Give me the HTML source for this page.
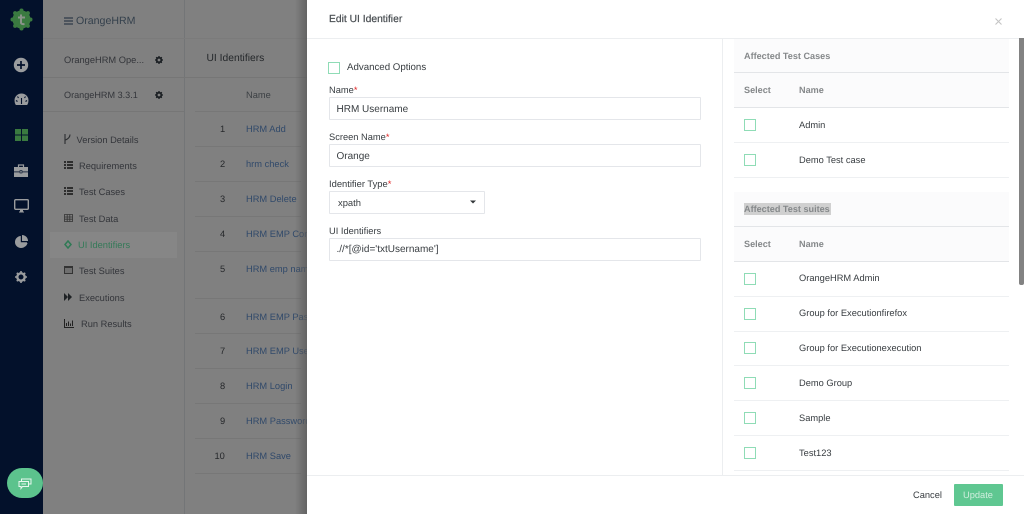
<!DOCTYPE html>
<html><head><meta charset="utf-8"><style>
html,body{margin:0;padding:0;width:1024px;height:514px;overflow:hidden;background:#fff}
body{font-family:"Liberation Sans",sans-serif;font-size:9.3px;position:relative;text-rendering:geometricPrecision}
#w{position:absolute;left:0;top:0;width:1024px;height:514px;overflow:hidden;filter:blur(.3px)}
#w div,#w svg{position:absolute}
.t{position:absolute;white-space:nowrap;line-height:12px;margin-top:1px}
.bg{background:#808080}
.dk{color:#26282b}
.lk{color:#30496a}
.nm{color:#33353a}
.rule{height:1px;background:#777}
.m{color:#383d41}
.v{font-size:10px}
.h{color:#85888a;font-weight:bold;font-size:9.1px}
.cb{width:10px;height:10px;border:1px solid #8fdcb6;background:#fff}
.inp{height:21px;border:1px solid #e4e6ea;background:#fff;border-radius:1px}
.l{height:1px;background:#eef0f2;left:734px;width:275px}
.l2{height:1px;background:#e3e5e8;left:734px;width:275px}
.s{color:#e02a2a}
</style></head><body><div id="w">

<div class="bg" style="left:0;top:0;width:310px;height:514px"></div>
<div style="left:0;top:0;width:43px;height:514px;background:#03112b"></div>
<div style="left:184px;top:0;width:1px;height:514px;background:#737577"></div>
<div class="rule" style="left:43px;top:38px;width:264px;background:#7b7b7b"></div>
<div class="rule" style="left:43px;top:77px;width:264px;background:#767676"></div>
<div class="rule" style="left:43px;top:111px;width:141px;background:#767676"></div>
<div style="left:50px;top:232px;width:127px;height:26px;background:#868686"></div>

<!-- logo -->
<svg style="left:10px;top:8px" width="23" height="23" viewBox="0 0 23 23"><g fill="#3a7a40"><circle cx="11.5" cy="11.5" r="9"/><circle cx="11.5" cy="2.5" r="2"/><circle cx="11.5" cy="20.5" r="2"/><circle cx="2.5" cy="11.5" r="2"/><circle cx="20.5" cy="11.5" r="2"/><circle cx="5.1" cy="5.1" r="2"/><circle cx="17.9" cy="5.1" r="2"/><circle cx="5.1" cy="17.9" r="2"/><circle cx="17.9" cy="17.9" r="2"/></g><path d="M11 6.5V14.5Q11 16.5 14.5 16M8 9.5H15" fill="none" stroke="#8a948a" stroke-width="2"/></svg>

<!-- sidebar icons -->
<svg style="left:13px;top:57px" width="16" height="16" viewBox="0 0 16 16"><circle cx="8" cy="8" r="7.2" fill="#9a9c9e"/><path d="M8 4v8M4 8h8" stroke="#03112b" stroke-width="1.7"/></svg>
<svg style="left:14px;top:93px" width="15" height="13" viewBox="0 0 15 13"><path d="M7.5 .5A7 7 0 0 0 .5 7.5Q.5 10 1.8 12H13.2Q14.5 10 14.500 7.500A7 7 0 0 0 7.500 .5Z" fill="#9a9c9e"/><path d="M7.500 11V5M3.500 8.500L2 7.500M11.500 8.500L13 7.500M4.500 5L3.500 3.500M10.500 5L11.500 3.500" stroke="#03112b" stroke-width="1.100"/></svg>
<svg style="left:15px;top:129px" width="13" height="12" viewBox="0 0 13 12"><g fill="#3a7a40"><rect width="6" height="5.500"/><rect x="7" width="6" height="5.500"/><rect y="6.500" width="6" height="5.500"/><rect x="7" y="6.500" width="6" height="5.500"/></g></svg>
<svg style="left:14px;top:164px" width="14" height="13" viewBox="0 0 14 13"><path d="M4.500 3V1h5v2" fill="none" stroke="#9a9c9e" stroke-width="1.200"/><rect y="3" width="14" height="4.500" fill="#9a9c9e"/><rect y="8.300" width="14" height="4.700" fill="#9a9c9e"/><rect x="6" y="6.500" width="2" height="2.500" fill="#9a9c9e" stroke="#03112b" stroke-width=".6"/></svg>
<svg style="left:14px;top:199px" width="15" height="14" viewBox="0 0 15 14"><rect x=".7" y=".7" width="13.600" height="9.600" rx="1" fill="none" stroke="#9a9c9e" stroke-width="1.400"/><path d="M5 13h5M6.500 10.500h2V13h-2z" stroke="#9a9c9e" fill="#9a9c9e"/></svg>
<svg style="left:15px;top:235px" width="13" height="13" viewBox="0 0 13 13"><path d="M5.800 1A6 6 0 1 0 12 7.200H5.800Z" fill="#9a9c9e"/><path d="M7 0A6 6 0 0 1 13 6H7ZM7.800 8H12.600Q11.800 10.500 10.400 11.500Z" fill="#9a9c9e"/></svg>
<svg style="left:15px;top:271px" width="12" height="12" viewBox="0 0 12 12"><circle cx="6" cy="6" r="3.700" fill="none" stroke="#9a9c9e" stroke-width="2.400"/><path d="M6 0v12M0 6h12M1.800 1.800l8.400 8.400M10.200 1.800l-8.400 8.400" stroke="#9a9c9e" stroke-width="1.600" stroke-dasharray="2.200 7.600"/></svg>

<!-- chat button -->
<div style="left:7px;top:468px;width:36px;height:30px;border-radius:15px;background:#5cc38d"></div>
<svg style="left:18px;top:478px" width="14" height="12" viewBox="0 0 14 12"><path d="M3.500 3V1H13V6H11M1 3.500H10.500V8.500H4.500L3 10.500V8.500H1ZM3.500 6H8" fill="none" stroke="#e8f7ef" stroke-width="1"/></svg>

<!-- header -->
<svg style="left:64px;top:17px" width="9" height="8" viewBox="0 0 9 8"><path d="M0 1h9M0 4h9M0 7h9" stroke="#2f3a48" stroke-width="1.300"/></svg>
<span class="t" style="left:76px;top:14px;font-size:10.600px;color:#34404c">OrangeHRM</span>
<span class="t nm" style="left:64px;top:53px">OrangeHRM Ope...</span>
<span class="t nm" style="left:64px;top:88px;font-size:9.100px">OrangeHRM 3.3.1</span>
<svg style="left:155px;top:56px" width="8" height="8" viewBox="0 0 12 12"><circle cx="6" cy="6" r="3.500" fill="none" stroke="#1c2024" stroke-width="2.800"/><path d="M6 0v12M0 6h12M1.800 1.800l8.400 8.400M10.200 1.800l-8.400 8.400" stroke="#1c2024" stroke-width="2" stroke-dasharray="2.200 7.600"/></svg>
<svg style="left:155px;top:91px" width="8" height="8" viewBox="0 0 12 12"><circle cx="6" cy="6" r="3.500" fill="none" stroke="#1c2024" stroke-width="2.800"/><path d="M6 0v12M0 6h12M1.800 1.800l8.400 8.400M10.200 1.800l-8.400 8.400" stroke="#1c2024" stroke-width="2" stroke-dasharray="2.200 7.600"/></svg>
<span class="t" style="left:206.500px;top:52px;font-size:10.300px;color:#24272a">UI Identifiers</span>
<span class="t" style="left:246px;top:88px;color:#3c4044">Name</span>
<div class="rule" style="left:195px;top:111px;width:106px"></div>

<!-- left menu -->
<svg style="left:64px;top:134px" width="7" height="10" viewBox="0 0 7 10"><path d="M1 0V10M6 0.500Q6 4 1.500 6" fill="none" stroke="#2b2d30" stroke-width="1.100"/></svg>
<span class="t nm" style="left:76.500px;top:133px">Version Details</span>
<svg style="left:64px;top:161px" width="9" height="8" viewBox="0 0 9 8"><path d="M0 1h2M3 1h6M0 4h2M3 4h6M0 7h2M3 7h6" stroke="#222" stroke-width="1.700"/></svg>
<span class="t nm" style="left:79px;top:159px">Requirements</span>
<svg style="left:64px;top:187px" width="9" height="8" viewBox="0 0 9 8"><path d="M0 1h2M3 1h6M0 4h2M3 4h6M0 7h2M3 7h6" stroke="#222" stroke-width="1.700"/></svg>
<span class="t nm" style="left:79px;top:185px">Test Cases</span>
<svg style="left:64px;top:214px" width="9" height="8" viewBox="0 0 9 8"><path d="M.5 .5h8v7h-8zM.5 3h8M.5 5.200h8M3.200 .5v7M5.800 .5v7" fill="none" stroke="#333" stroke-width=".8"/></svg>
<span class="t nm" style="left:79px;top:212px">Test Data</span>
<svg style="left:64px;top:240px" width="8" height="9" viewBox="0 0 8 9"><path d="M4 1L7 4.500L4 8L1 4.500Z" fill="none" stroke="#2f7a55" stroke-width="1.500"/></svg>
<span class="t" style="left:78px;top:238px;color:#347a58">UI Identifiers</span>
<svg style="left:64px;top:266px" width="9" height="8" viewBox="0 0 9 8"><rect width="9" height="8" fill="#333"/><rect x="1" y="2" width="7" height="5" fill="#6f6f6f"/></svg>
<span class="t nm" style="left:79px;top:264px">Test Suites</span>
<svg style="left:64px;top:293px" width="8" height="8" viewBox="0 0 8 8"><path d="M0 0L4 4L0 8ZM4 0L8 4L4 8Z" fill="#1f2225"/></svg>
<span class="t nm" style="left:79px;top:291px">Executions</span>
<svg style="left:64px;top:319px" width="10" height="9" viewBox="0 0 10 9"><path d="M.5 0V8.500H10M2.500 7V4M4.500 7V2.500M6.500 7V4.500M8.500 7V1.500" fill="none" stroke="#222" stroke-width="1"/></svg>
<span class="t nm" style="left:81px;top:317px">Run Results</span>

<!-- table rows -->
<span class="t dk" style="left:220px;top:122px">1</span><span class="t lk" style="left:246px;top:122px">HRM Add</span>
<span class="t dk" style="left:220px;top:157px">2</span><span class="t lk" style="left:246px;top:157px">hrm check</span>
<span class="t dk" style="left:220px;top:192px">3</span><span class="t lk" style="left:246px;top:192px">HRM Delete</span>
<span class="t dk" style="left:220px;top:227px">4</span><span class="t lk" style="left:246px;top:227px">HRM EMP Con</span>
<span class="t dk" style="left:220px;top:262px">5</span><span class="t lk" style="left:246px;top:262px">HRM emp nam</span>
<span class="t dk" style="left:220px;top:310px">6</span><span class="t lk" style="left:246px;top:310px">HRM EMP Pas</span>
<span class="t dk" style="left:220px;top:344px">7</span><span class="t lk" style="left:246px;top:344px">HRM EMP Use</span>
<span class="t dk" style="left:220px;top:379px">8</span><span class="t lk" style="left:246px;top:379px">HRM Login</span>
<span class="t dk" style="left:220px;top:414px">9</span><span class="t lk" style="left:246px;top:414px">HRM Password</span>
<span class="t dk" style="left:214.500px;top:449px">10</span><span class="t lk" style="left:246px;top:449px">HRM Save</span>
<div class="rule" style="left:195px;top:146px;width:106px"></div>
<div class="rule" style="left:195px;top:181px;width:106px"></div>
<div class="rule" style="left:195px;top:216px;width:106px"></div>
<div class="rule" style="left:195px;top:251px;width:106px"></div>
<div class="rule" style="left:195px;top:298px;width:106px"></div>
<div class="rule" style="left:195px;top:333px;width:106px"></div>
<div class="rule" style="left:195px;top:368px;width:106px"></div>
<div class="rule" style="left:195px;top:403px;width:106px"></div>
<div class="rule" style="left:195px;top:438px;width:106px"></div>
<div class="rule" style="left:195px;top:473px;width:106px"></div>
<div style="left:295px;top:0;width:12px;height:514px;background:linear-gradient(90deg,rgba(90,90,90,0),rgba(90,90,90,.75))"></div>

<!-- modal -->
<div style="left:307px;top:0;width:717px;height:514px;background:#fff"></div>
<div style="left:307px;top:38px;width:717px;height:1px;background:#eceef0"></div>
<div style="left:722px;top:39px;width:1px;height:436px;background:#eceef0"></div>
<div style="left:307px;top:475px;width:717px;height:1px;background:#eceef0"></div>
<span class="t" style="left:329px;top:13px;font-size:10.300px;color:#474c50;-webkit-text-stroke:.2px #474c50">Edit UI Identifier</span>
<svg style="left:995px;top:18px" width="7" height="7" viewBox="0 0 7 7"><path d="M.5 .5L6.500 6.500M6.500 .5L.5 6.500" stroke="#c4c4c4" stroke-width="1.100"/></svg>

<div class="cb" style="left:328px;top:62px"></div>
<span class="t m" style="left:347px;top:60.500px;font-size:9.700px">Advanced Options</span>
<span class="t m" style="left:329px;top:83px">Name<span class="s">*</span></span>
<div class="inp" style="left:329px;top:97px;width:370px"></div>
<span class="t m v" style="left:336.500px;top:102.500px">HRM Username</span>
<span class="t m" style="left:329px;top:130px">Screen Name<span class="s">*</span></span>
<div class="inp" style="left:329px;top:144px;width:370px"></div>
<span class="t m v" style="left:336.500px;top:149.500px">Orange</span>
<span class="t m" style="left:329px;top:177px;font-size:9.400px">Identifier Type<span class="s">*</span></span>
<div class="inp" style="left:329px;top:191px;width:154px"></div>
<span class="t m" style="left:338px;top:196px;font-size:9.400px">xpath</span>
<svg style="left:470px;top:200px" width="6" height="4" viewBox="0 0 6 4"><path d="M0 .5H6L3 3.500Z" fill="#33373a"/></svg>
<span class="t m" style="left:329px;top:224px">UI Identifiers</span>
<div class="inp" style="left:329px;top:238px;width:370px"></div>
<span class="t m v" style="left:336.500px;top:243px">.//*[@id='txtUsername']</span>

<!-- right panel -->
<div style="left:734px;top:39px;width:275px;height:68px;background:#fbfbfc"></div>
<div class="l2" style="top:72px"></div>
<div class="l2" style="top:107px"></div>
<span class="t h" style="left:744px;top:49px">Affected Test Cases</span>
<span class="t h" style="left:744px;top:83px">Select</span>
<span class="t h" style="left:799px;top:83px">Name</span>
<div class="cb" style="left:744px;top:119px"></div><span class="t m" style="left:799px;top:118px">Admin</span>
<div class="l" style="top:142px"></div>
<div class="cb" style="left:744px;top:154px"></div><span class="t m" style="left:799px;top:153px">Demo Test case</span>
<div class="l" style="top:177px"></div>

<div style="left:734px;top:192px;width:275px;height:69px;background:#fbfbfc"></div>
<div class="l2" style="top:226px"></div>
<div class="l2" style="top:261px"></div>
<div style="left:744px;top:203px;width:87px;height:12px;background:#d0d0d0"></div>
<span class="t h" style="left:744px;top:202px">Affected Test suites</span>
<span class="t h" style="left:744px;top:237px">Select</span>
<span class="t h" style="left:799px;top:237px">Name</span>
<div class="cb" style="left:744px;top:273px"></div><span class="t m" style="left:799px;top:271px">OrangeHRM Admin</span>
<div class="l" style="top:296px"></div>
<div class="cb" style="left:744px;top:308px"></div><span class="t m" style="left:799px;top:306px">Group for Executionfirefox</span>
<div class="l" style="top:331px"></div>
<div class="cb" style="left:744px;top:342px"></div><span class="t m" style="left:799px;top:341px">Group for Executionexecution</span>
<div class="l" style="top:365px"></div>
<div class="cb" style="left:744px;top:377px"></div><span class="t m" style="left:799px;top:376px">Demo Group</span>
<div class="l" style="top:400px"></div>
<div class="cb" style="left:744px;top:412px"></div><span class="t m" style="left:799px;top:411px">Sample</span>
<div class="l" style="top:435px"></div>
<div class="cb" style="left:744px;top:447px"></div><span class="t m" style="left:799px;top:446px">Test123</span>
<div class="l" style="top:470px"></div>

<div style="left:1019px;top:38px;width:5px;height:247px;background:#828282;border-radius:0 0 2px 2px"></div>

<span class="t m" style="left:913px;top:488px">Cancel</span>
<div style="left:954px;top:484px;width:49px;height:22px;background:#5fc791;border-radius:1px"></div>
<span class="t" style="left:963px;top:488px;color:#cfeedd">Update</span>
</div></body></html>
